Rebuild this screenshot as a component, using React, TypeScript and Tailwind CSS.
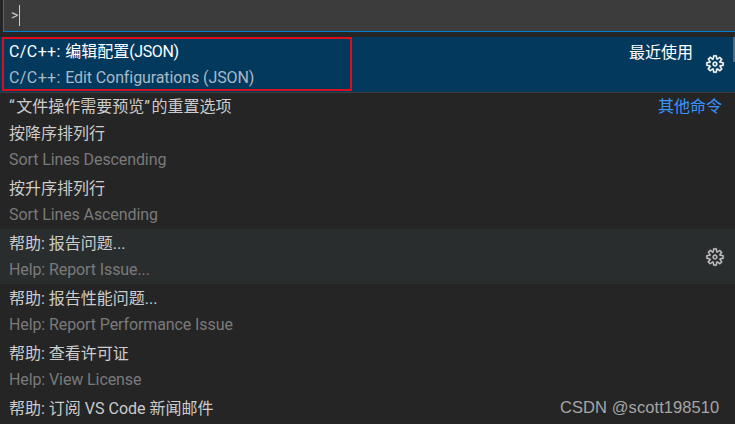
import { VscGear } from "react-icons/vsc";

const cjk = "font-['Roboto','Noto_Sans_CJK_SC',sans-serif]";

interface RowProps {
  title: React.ReactNode;
  detail?: React.ReactNode;
  selected?: boolean;
  hovered?: boolean;
}

function Row({ title, detail, selected, hovered }: RowProps) {
  return (
    <div
      className={`h-[55px] flex flex-col pl-[9px] ${selected ? "bg-[#04395e]" : hovered ? "bg-[#2a2d2e]" : ""}`}
    >
      <div className={`h-[27px] leading-[29px] ${selected ? "text-white" : "text-[#cccccc]"}`}>{title}</div>
      <div className={`h-[28px] leading-[28px] tracking-[-0.1px] ${selected ? "text-[#a9b9c6]" : "text-[#7a7a7a]"}`}>{detail}</div>
    </div>
  );
}

export default function App() {
  return (
    <div className={`w-[735px] h-[424px] overflow-hidden relative bg-[#252526] text-[16px] ${cjk}`}>
      <div className="pl-[3px] pb-[5px]">
        <div className="h-[32px] bg-[#3c3c3c] border-b border-l border-[#007fd4] flex items-center pl-[7px] pb-[1px] text-[#cccccc]">
          <span className="text-[14px]">&gt;</span>
          <span className="w-px h-[21px] bg-[#cccccc] ml-[1px]"></span>
        </div>
      </div>

      <div className="relative">
        <Row
          title={<><span className="tracking-[0.4px]">C/C++: </span>编辑配置<span className="tracking-[-0.4px]">(JSON)</span></>}
          detail={<><span className="tracking-[0.4px]">C/C++: </span>Edit Configurations (JSON)</>}
          selected
        />
        <span className="absolute right-[42px] top-[2px] leading-[27px] text-white">最近使用</span>
        <VscGear stroke="currentColor" strokeWidth={0.3} className="absolute right-[10px] top-[17px] text-white text-[20px]" />
        <div className="absolute right-0 top-0 w-[2px] h-[25px] bg-[#4d6b80]"></div>
        <div className="absolute left-[2px] top-0 w-[350px] h-[54px] border-2 border-[#d8101c]"></div>
      </div>

      <div className="border-t border-[#3c3c3c]"></div>

      <div className="h-[26px] flex justify-between pl-[9px] pr-[13px] leading-[28px] text-[#cccccc]">
        <span>
          <span className="tracking-[1.5px]">“</span>文件操作需要预览<span className="tracking-[1.5px]">”</span>的重置选项
        </span>
        <span className="text-[#3794ff]">其他命令</span>
      </div>

      <Row title="按降序排列行" detail="Sort Lines Descending" />
      <Row title="按升序排列行" detail="Sort Lines Ascending" />
      <div className="relative">
        <Row title="帮助: 报告问题..." detail="Help: Report Issue..." hovered />
        <VscGear stroke="currentColor" strokeWidth={0.2} className="absolute right-[10px] top-[18px] text-[#c5c5c5] text-[20px]" />
      </div>
      <Row title="帮助: 报告性能问题..." detail="Help: Report Performance Issue" />
      <Row title="帮助: 查看许可证" detail="Help: View License" />
      <Row title="帮助: 订阅 VS Code 新闻邮件" />

      <div className="absolute left-[560px] top-[397px] text-[16.5px] leading-[20px] tracking-[0.08px] text-[#a6a6a6] font-['Liberation_Sans',sans-serif]">
        CSDN @scott198510
      </div>
    </div>
  );
}
